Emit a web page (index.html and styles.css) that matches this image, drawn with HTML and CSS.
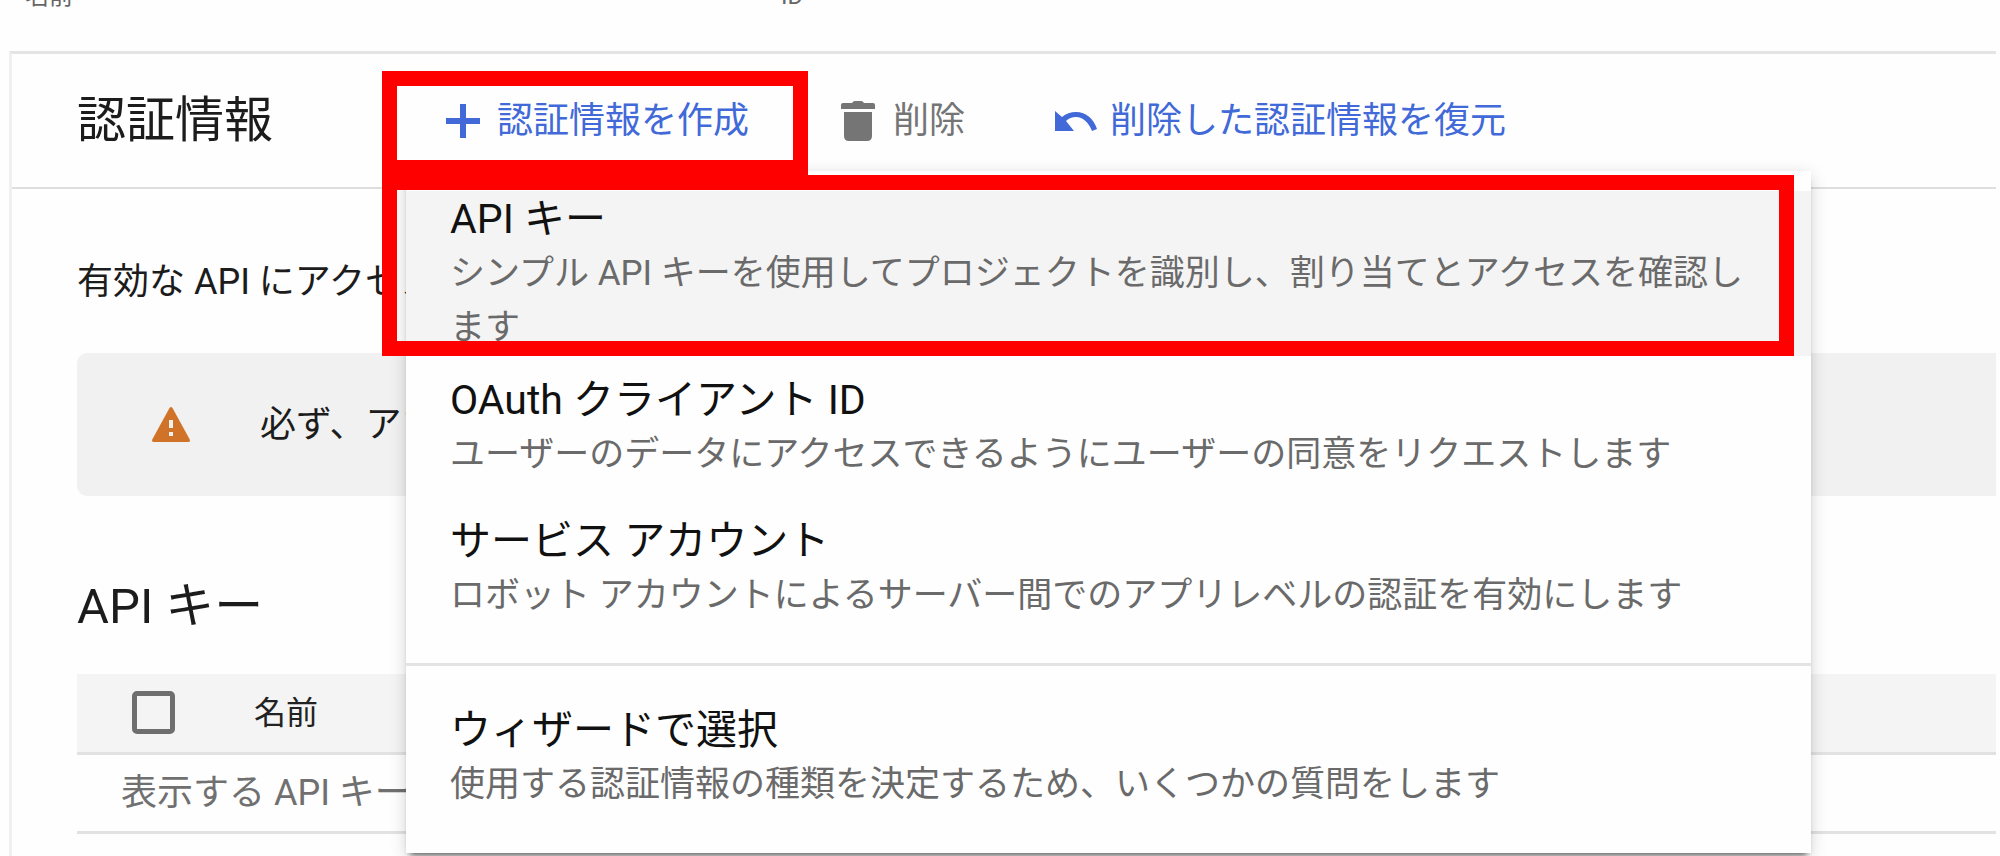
FILE: index.html
```html
<!DOCTYPE html>
<html lang="ja">
<head>
<meta charset="utf-8">
<title>認証情報</title>
<link rel="stylesheet" href="styles.css">
</head>
<body>
<div class="strip">
  <span class="strip-cell">名前</span>
  <span class="strip-cell">ID</span>
</div>
<main class="panel">
  <header class="toolbar">
    <h1 class="title">認証情報</h1>
    <div class="create">
      <button class="action" type="button">
        <svg class="icon-plus" viewBox="0 0 34 34" aria-hidden="true"><path d="M14 0h6v14h14v6H20v14h-6V20H0v-6h14z"/></svg>
        認証情報を作成
      </button>
      <div class="menu" role="menu">
        <button class="item item-active" type="button" role="menuitem">
          <span class="item-title">API キー</span>
          <span class="item-text">シンプル API キーを使用してプロジェクトを識別し、割り当てとアクセスを確認します</span>
        </button>
        <button class="item" type="button" role="menuitem">
          <span class="item-title">OAuth クライアント ID</span>
          <span class="item-text">ユーザーのデータにアクセスできるようにユーザーの同意をリクエストします</span>
        </button>
        <button class="item" type="button" role="menuitem">
          <span class="item-title">サービス アカウント</span>
          <span class="item-text">ロボット アカウントによるサーバー間でのアプリレベルの認証を有効にします</span>
        </button>
        <hr class="divider">
        <button class="item" type="button" role="menuitem">
          <span class="item-title">ウィザードで選択</span>
          <span class="item-text">使用する認証情報の種類を決定するため、いくつかの質問をします</span>
        </button>
      </div>
      <div class="mark mark-button"></div>
      <div class="mark mark-item"></div>
    </div>
    <button class="action action-delete" type="button" disabled>
      <svg class="icon-trash" viewBox="0 0 34 40" aria-hidden="true"><path d="M11 2q1-2 3-2h6q2 0 3 2h9q2 0 2 2v4H0V4q0-2 2-2zM3 11h28v24q0 5-5 5H8q-5 0-5-5z"/></svg>
      削除
    </button>
    <button class="action action-restore" type="button">
      <svg class="icon-undo" viewBox="0 0 42 20" aria-hidden="true"><path d="M0 0l7 6Q13 1 21 1C31 1 39 8 42 18l-5 2C34 12 28 6 21 6q-6 0-10 4l8 10H0z"/></svg>
      削除した認証情報を復元
    </button>
  </header>
  <div class="content">
    <p class="intro">有効な API にアクセス</p>
    <div class="alert">
      <svg class="icon-warn" viewBox="0 0 38 35" aria-hidden="true"><path fill="#d07328" d="M17.500 1q1.500-2 3 0L37.500 32q1.500 3-1.500 3H2q-3 0-1.500-3z"/><path fill="#f1f1f1" d="M17 13h4v8h-4zM17 25h4v4h-4z"/></svg>
      <span>必ず、アプ</span>
    </div>
    <h2 class="title subtitle">API キー</h2>
    <table class="keys">
      <thead>
        <tr>
          <th class="check"><input class="box" type="checkbox" aria-label="すべて選択"></th>
          <th>名前</th>
        </tr>
      </thead>
      <tbody>
        <tr><td class="empty" colspan="2">表示する API キー</td></tr>
      </tbody>
    </table>
  </div>
</main>
</body>
</html>
```
FILE: styles.css
```css
* {
  box-sizing: border-box;
}

body {
  margin: 0;
  min-height: 100vh;
  display: flex;
  flex-direction: column;
  overflow: hidden;
  background: #fefefe;
  color: #1c1c1c;
  font-family: Roboto, "Noto Sans CJK JP", sans-serif;
  font-size: 36px;
  line-height: 54px;
}

button {
  border: 0;
  padding: 0;
  background: none;
  color: inherit;
  font: inherit;
  text-align: left;
}

svg {
  display: block;
  flex: none;
  fill: currentColor;
}

.strip {
  display: grid;
  grid-template-columns: 756px 1fr;
  height: 51px;
  padding-left: 25px;
  overflow: hidden;
  color: #666;
  font-size: 24px;
  line-height: 24px;
}

.strip-cell {
  margin-top: -16px;
}

.panel {
  flex: 1;
  margin: 0 4px 0 9px;
  border-top: 3px solid #e4e4e4;
  border-left: 3px solid #f0f0f0;
}

.toolbar {
  display: flex;
  align-items: center;
  height: 135px;
  padding-left: 65px;
  border-bottom: 2px solid #dedede;
}

.title {
  margin: 0;
  font-size: 49px;
  font-weight: 400;
  line-height: 72px;
}

.create {
  position: relative;
  margin-left: 173px;
}

.action {
  display: flex;
  align-items: center;
  color: #4169d8;
  white-space: nowrap;
}

.action-delete {
  margin-left: 92px;
  color: #757575;
}

.action-restore {
  margin-left: 90px;
}

.icon-plus {
  width: 34px;
  height: 34px;
  margin-right: 17px;
}

.icon-trash {
  width: 34px;
  height: 40px;
  margin-right: 18px;
}

.icon-undo {
  width: 42px;
  height: 20px;
  margin-right: 13px;
}

.menu {
  position: absolute;
  z-index: 1;
  top: 77px;
  left: -40px;
  width: 1405px;
  padding: 20px 0 26px;
  background: #fefefe;
  box-shadow: 0 6px 6px -4px rgba(0, 0, 0, 0.6), 0 4px 16px rgba(0, 0, 0, 0.16);
}

.item {
  display: block;
  width: 100%;
  padding: 16px 35px 15px 44px;
}

.item-active {
  padding-top: 0;
  padding-bottom: 1px;
  background: #f4f4f4;
}

.item-title,
.item-text {
  display: block;
}

.item-title {
  color: #111;
  font-size: 41px;
  line-height: 56px;
}

.item-text {
  color: #6a6a6a;
  font-size: 35px;
}

.divider {
  height: 3px;
  margin: 25px 0 20px;
  border: 0;
  background: #e4e4e4;
}

.mark {
  position: absolute;
  z-index: 2;
  left: -64px;
  border: 15px solid #f00;
  pointer-events: none;
}

.mark-button {
  top: -23px;
  width: 426px;
  height: 104px;
}

.mark-item {
  top: 81px;
  width: 1412px;
  height: 181px;
}

.content {
  padding: 66px 0 0 65px;
}

.intro {
  margin: 0;
}

.alert {
  display: flex;
  align-items: center;
  gap: 70px;
  min-height: 143px;
  margin-top: 44px;
  padding-left: 75px;
  border-radius: 10px 0 0 10px;
  background: #f1f1f1;
}

.icon-warn {
  width: 38px;
  height: 35px;
}

.subtitle {
  margin-top: 75px;
}

.keys {
  width: 100%;
  margin-top: 31px;
  border-collapse: collapse;
  color: #222;
}

.keys th,
.keys td {
  height: 79px;
  padding: 0;
  border-bottom: 3px solid #e2e2e2;
  font-weight: 400;
  text-align: left;
}

.keys th {
  background: #f4f4f4;
  font-size: 32px;
}

.keys .check {
  width: 177px;
  padding-left: 55px;
}

.keys .empty {
  padding-left: 44px;
  color: #707070;
}

.box {
  display: block;
  appearance: none;
  width: 43px;
  height: 43px;
  margin: 0;
  border: 5px solid #6e6e6e;
  border-radius: 5px;
}
```
